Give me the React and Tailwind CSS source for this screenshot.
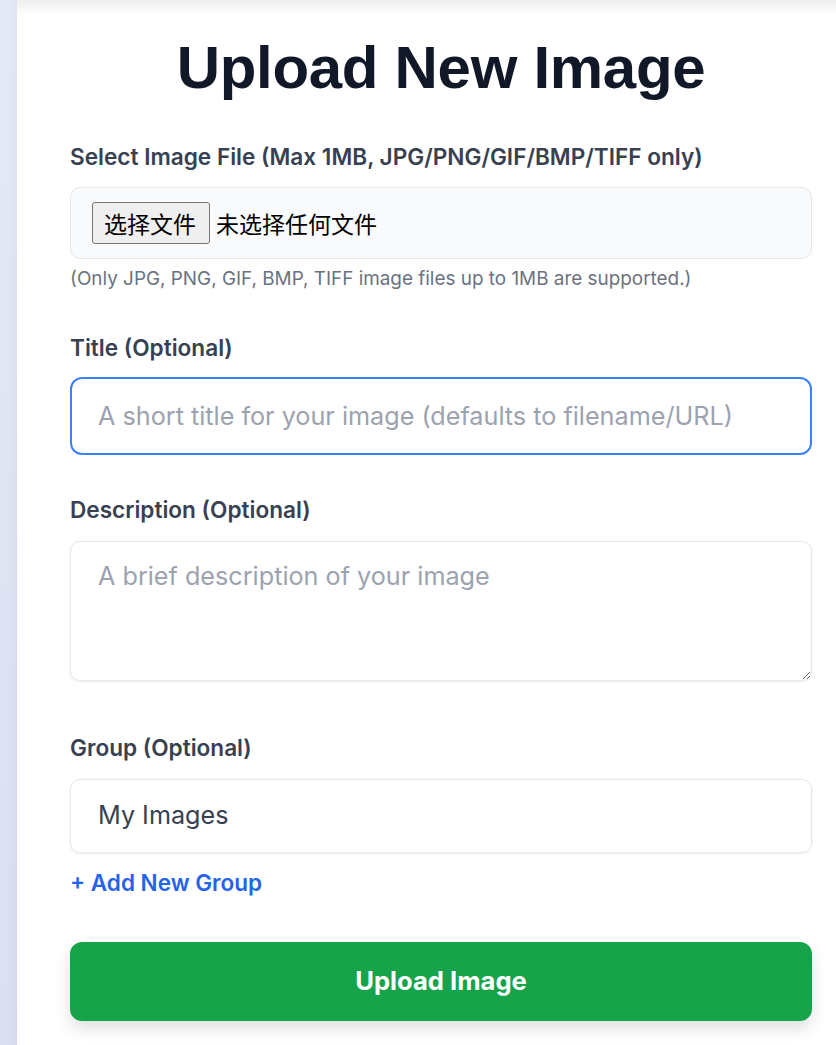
import React from 'react';

const labelCls = 'block text-[22.6px] leading-[28px] font-semibold text-[#374151]';

export default function App() {
  return (
    <div className="flex min-h-[1045px] w-[836px] overflow-hidden bg-gradient-to-b from-[#e5eaf6] to-[#dbdff2] pl-[17px] font-['Inter',sans-serif]">
      <div className="min-h-[1045px] w-[848px] shrink-0 bg-white shadow-[0_0_12px_rgba(0,0,0,0.06)]">
        {/* top fade */}
        <div className="h-[16px] bg-gradient-to-b from-[#efefef] to-white" />

        <div className="px-[53px] pt-[22px]">
          <h1 className="text-center font-['Liberation_Sans',Arial,sans-serif] text-[60px] leading-[60px] font-bold tracking-[-0.3px] text-[#111827]">
            Upload New Image
          </h1>

          <form className="mt-[45px]" onSubmit={(e) => e.preventDefault()}>
            {/* File */}
            <label className={labelCls}>Select Image File (Max 1MB, JPG/PNG/GIF/BMP/TIFF only)</label>
            <div className="mt-[16px] flex h-[72px] items-center rounded-[10px] border border-[#e5e7eb] bg-[#f9fafb] px-[21px]">
              <button
                type="button"
                className="h-[42px] rounded-[3px] border border-[#767676] bg-[#efefef] pl-[11px] pr-[13px] font-['Noto_Sans_CJK_SC',sans-serif] text-[23px] leading-none text-black"
              >
                选择文件
              </button>
              <span className="ml-[6px] font-['Noto_Sans_CJK_SC',sans-serif] text-[23px] text-black">未选择任何文件</span>
            </div>
            <p className="mt-[8px] text-[18.9px] leading-[24px] text-[#6b7280]">
              (Only JPG, PNG, GIF, BMP, TIFF image files up to 1MB are supported.)
            </p>

            {/* Title */}
            <label className={`${labelCls} mt-[43px]`}>Title (Optional)</label>
            <input
              type="text"
              placeholder="A short title for your image (defaults to filename/URL)"
              className="mt-[15px] block h-[78px] w-full rounded-[12px] border-2 border-[#3b82f6] px-[26px] text-[25.2px] text-[#374151] outline-none placeholder:text-[#9ca3af]"
            />

            {/* Description */}
            <label className={`${labelCls} mt-[41px]`}>Description (Optional)</label>
            <textarea
              placeholder="A brief description of your image"
              className="mt-[17px] block h-[140px] w-full rounded-[10px] border border-[#e5e7eb] px-[27px] py-[18px] text-[25.2px] leading-[32px] text-[#374151] shadow-[0_1px_3px_rgba(0,0,0,0.08)] outline-none placeholder:text-[#9ca3af]"
            />

            {/* Group */}
            <label className={`${labelCls} mt-[53px]`}>Group (Optional)</label>
            <div className="mt-[17px] flex h-[74px] items-center rounded-[10px] border border-[#e5e7eb] px-[27px] text-[25.2px] text-[#374151] shadow-[0_1px_3px_rgba(0,0,0,0.08)]">
              My Images
            </div>
            <button type="button" className="mt-[16px] block text-[22.5px] leading-[28px] font-semibold text-[#2563eb]">
              + Add New Group
            </button>

            <button
              type="submit"
              className="mt-[45px] block h-[79px] w-full rounded-[12px] bg-[#16a34a] text-[25.6px] font-bold text-white shadow-[0_8px_16px_rgba(0,0,0,0.12)]"
            >
              Upload Image
            </button>
          </form>
        </div>
      </div>
    </div>
  );
}
